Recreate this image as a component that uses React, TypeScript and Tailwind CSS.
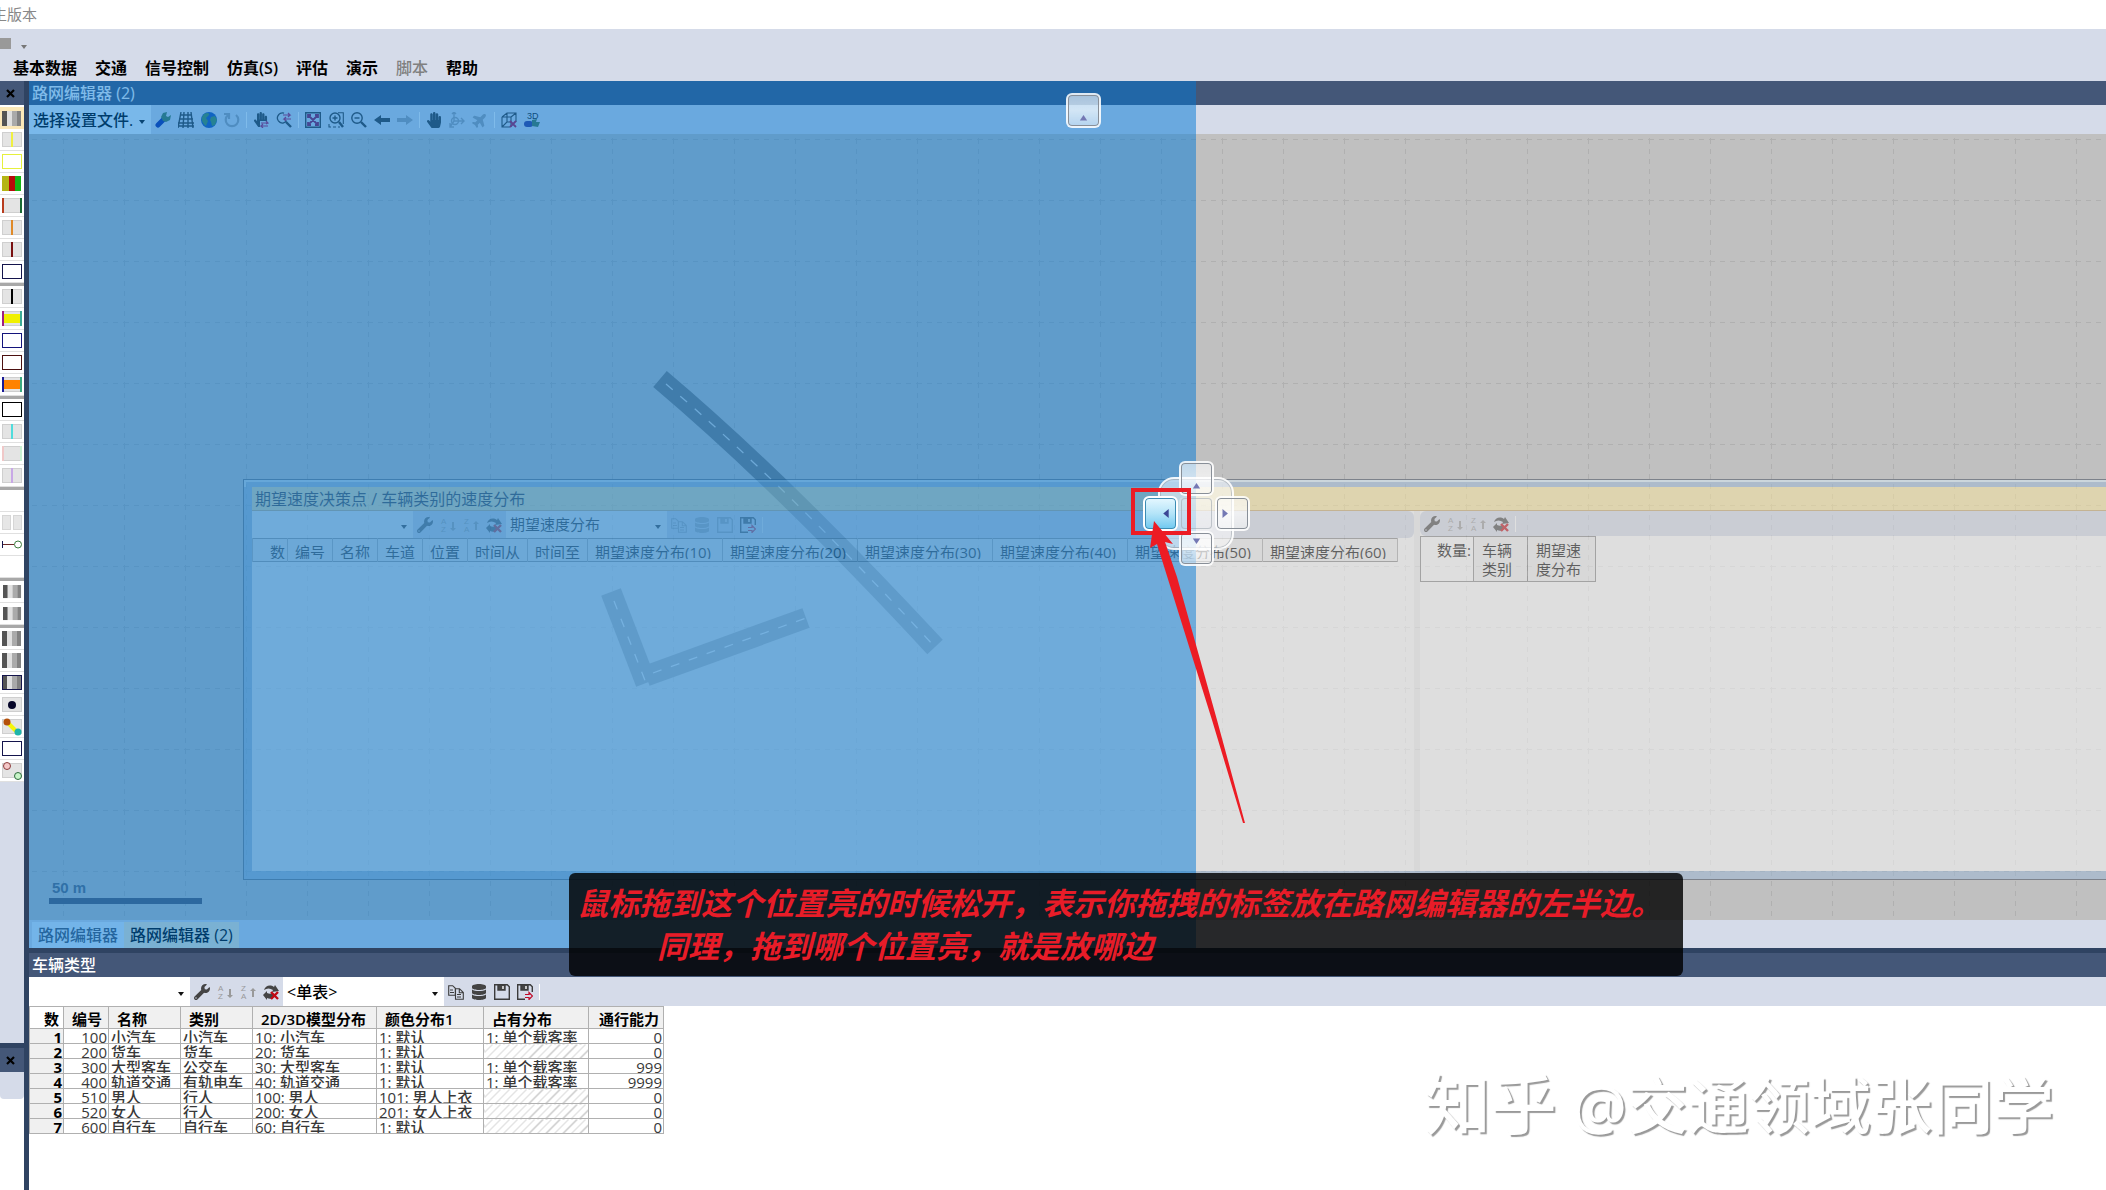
import React, { useState } from 'react';
import { FaWrench, FaHandPaper, FaDatabase, FaPlane } from 'react-icons/fa';

const menu = ['基本数据', '交通', '信号控制', '仿真(S)', '评估', '演示', '脚本', '帮助'];

const vehicleHead = ['数', '编号', '名称', '类别', '2D/3D模型分布', '颜色分布1', '占有分布', '通行能力'];
const vehicleRows = [
  ['1', '100', '小汽车', '小汽车', '10: 小汽车', '1: 默认', '1: 单个载客率', '0'],
  ['2', '200', '货车', '货车', '20: 货车', '1: 默认', '', '0'],
  ['3', '300', '大型客车', '公交车', '30: 大型客车', '1: 默认', '1: 单个载客率', '999'],
  ['4', '400', '轨道交通', '有轨电车', '40: 轨道交通', '1: 默认', '1: 单个载客率', '9999'],
  ['5', '510', '男人', '行人', '100: 男人', '101: 男人上衣', '', '0'],
  ['6', '520', '女人', '行人', '200: 女人', '201: 女人上衣', '', '0'],
  ['7', '600', '自行车', '自行车', '60: 自行车', '1: 默认', '', '0'],
];
const vehicleCols = [
  'w-[34px]', 'w-[45px]', 'w-[72px]', 'w-[72px]', 'w-[124px]', 'w-[107px]', 'w-[105px]', 'w-[75px]',
];

const speedHead = [
  ['数', 'w-[35px] text-right'],
  ['编号', 'w-[45px]'],
  ['名称', 'w-[45px]'],
  ['车道', 'w-[45px]'],
  ['位置', 'w-[45px]'],
  ['时间从', 'w-[60px]'],
  ['时间至', 'w-[60px]'],
  ['期望速度分布(10)', 'w-[135px]'],
  ['期望速度分布(20)', 'w-[135px]'],
  ['期望速度分布(30)', 'w-[135px]'],
  ['期望速度分布(40)', 'w-[135px]'],
  ['期望速度分布(50)', 'w-[135px]'],
  ['期望速度分布(60)', 'w-[135px]'],
];

// network object types in the sidebar, split into groups
const objectGroups = [
  ['link', 'bar:#f0f040', 'box:#e6f03c', 'signal', 'edges:#b83c1e:#1a6a34', 'bar:#e08a28', 'bar:#7a1010', 'box:#14144c'],
  ['bar:#000000', 'fill:#f0f000:#a02080:#3caa96', 'box:#14147c', 'box:#4c1010', 'fill:#ff8200:#1a1a96:#3caa82'],
  ['box:#000000', 'bar:#50dcdc', 'edges:#f0c8c8:#c8f0d2', 'bar:#c8a8e6'],
  ['none', 'split', 'connector', 'none'],
  ['linkSmall', 'linkSmall'],
  ['link', 'link', 'linkFrame', 'dot', 'route', 'box:#14144c', 'nodes'],
];

function ObjectIcon({ spec }: { spec: string }) {
  const [kind, a, b, c] = spec.split(':');
  const pad = <rect x="0.5" y="0.5" width="19" height="14" fill="#e4e4e4" stroke="#cfcfcf" />;
  return (
    <svg width="20" height="15" viewBox="0 0 20 15" className="block overflow-visible">
      {['bar', 'edges', 'dot', 'route', 'nodes', 'fill'].includes(kind) && pad}
      {kind === 'bar' && <rect x="9" width="2" height="15" fill={a} />}
      {kind === 'box' && <rect x="0.5" y="0.5" width="19" height="14" fill="#fff" stroke={a} />}
      {kind === 'edges' && (
        <>
          <rect width="2" height="15" fill={a} />
          <rect x="18" width="2" height="15" fill={b} />
        </>
      )}
      {kind === 'fill' && (
        <>
          <rect x="2" y="3" width="16" height="9" fill={a} />
          <rect width="2" height="15" fill={b} />
          <rect x="18" width="2" height="15" fill={c} />
        </>
      )}
      {kind === 'signal' && (
        <>
          <rect width="7" height="15" fill="#b4b414" />
          <rect x="7" width="6" height="15" fill="#b80a0a" />
          <rect x="13" width="6" height="15" fill="#14b414" />
        </>
      )}
      {(kind === 'link' || kind === 'linkFrame' || kind === 'linkSmall') && (
        <g transform={kind === 'linkSmall' ? 'translate(1 1) scale(0.95 0.87)' : undefined}>
          <rect width="5" height="15" fill="#545454" />
          <rect x="5" width="5" height="15" fill="#e0e0e0" />
          <rect x="10" width="5" height="15" fill="#aaaaaa" />
          <rect x="15" width="4" height="15" fill="#828282" />
        </g>
      )}
      {kind === 'linkFrame' && <rect x="0.5" y="0.5" width="19" height="14" fill="none" stroke="#14144c" />}
      {kind === 'split' && (
        <>
          <rect x="0.5" y="0.5" width="8" height="14" fill="#e6e6e6" stroke="#d6d6d6" />
          <rect x="11.5" y="0.5" width="8" height="14" fill="#e6e6e6" stroke="#d6d6d6" />
        </>
      )}
      {kind === 'connector' && (
        <>
          <path d="M0.5 4v7" stroke="#14144c" />
          <path d="M1 7.5h11" stroke="#6a2828" />
          <circle cx="16" cy="7.5" r="3.5" fill="#fff" stroke="#3c7a3c" />
        </>
      )}
      {kind === 'dot' && <circle cx="10" cy="8" r="4" fill="#050528" />}
      {kind === 'route' && (
        <>
          <path d="M6 4l9 9" stroke="#f5f50a" strokeWidth="4" />
          <circle cx="5" cy="3" r="3.5" fill="#b4500a" />
          <circle cx="16" cy="13" r="3.5" fill="#1eb4aa" />
        </>
      )}
      {kind === 'nodes' && (
        <>
          <circle cx="5" cy="3" r="3.5" fill="#f5c8c8" stroke="#8c3c3c" />
          <circle cx="16" cy="13" r="3.5" fill="#c8f5c8" stroke="#2d6a3c" />
        </>
      )}
    </svg>
  );
}

type ToolProps = { label: string; children: React.ReactNode; faded?: boolean };

function Tool({ label, children, faded }: ToolProps) {
  return (
    <button aria-label={label} className={faded ? 'size-4 shrink-0 opacity-35' : 'size-4 shrink-0'}>
      {children}
    </button>
  );
}

function Glyph({ children }: { children: React.ReactNode }) {
  return (
    <svg viewBox="0 0 16 16" width="16" height="16" fill="none" stroke="#3c3c3c" strokeWidth="1.4" className="block">
      {children}
    </svg>
  );
}

function Sep() {
  return <span className="-mx-px h-4 w-px shrink-0 border-l border-white" />;
}

function CloseIcon() {
  return (
    <svg viewBox="0 0 9 9" className="ml-1.5 size-[9px]">
      <path d="M1 1l7 7M8 1L1 8" stroke="#000" strokeWidth="2.2" />
    </svg>
  );
}

function Wrench() {
  return <FaWrench className="size-4 text-[#444]" />;
}

function SortTools() {
  return (
    <>
      <Tool label="设置">
        <Wrench />
      </Tool>
      <Tool label="升序">
        <svg viewBox="0 0 16 16" className="block size-4" fill="#999">
          <text x="1" y="7" fontSize="8" fontFamily="Liberation Sans">A</text>
          <text x="1" y="15" fontSize="8" fontFamily="Liberation Sans">Z</text>
          <path d="M12 5h2v6h2l-3 3-3-3h2z" />
        </svg>
      </Tool>
      <Tool label="降序">
        <svg viewBox="0 0 16 16" className="block size-4" fill="#999">
          <text x="1" y="7" fontSize="8" fontFamily="Liberation Sans">Z</text>
          <text x="1" y="15" fontSize="8" fontFamily="Liberation Sans">A</text>
          <path d="M12 13h2v-6h2l-3-3-3 3h2z" />
        </svg>
      </Tool>
      <Tool label="取消同步">
        <svg viewBox="0 0 16 16" className="block size-4">
          <path d="M1 6c1-4 6-6 10-3l1-2 4 6-7 1 1-2C7 4 4 4 1 6z" fill="#444" />
          <path d="M0 11l4-4v2c2 1 4 1 6 0v5c-2 1-4 1-6 0v2z" fill="#444" />
          <path d="M8 8l7 7M15 8l-7 7" stroke="#c00a14" strokeWidth="2.4" />
        </svg>
      </Tool>
    </>
  );
}

function SaveTools({ faded }: { faded?: boolean }) {
  return (
    <>
      <Tool label="复制" faded={faded}>
        <Glyph>
          <path d="M0.7 1.7h4l2.6 2.6v7H0.7zM7.5 4.7h4l3.8 3.8v6.8H7.5zM11.3 4.7v4h4M2 6h3M2 8.500h4M9 10.500h4M9 13h4" strokeWidth="1.1" />
        </Glyph>
      </Tool>
      <Tool label="数据库" faded={faded}>
        <FaDatabase className="size-4 text-[#444]" />
      </Tool>
      <Tool label="保存" faded={faded}>
        <Glyph>
          <path d="M0.7 0.7h12.600l2 2v12.600H0.700z" />
          <path d="M4 0.700h7v5.300H4z" fill="#444" />
          <path d="M9 2v3" stroke="#fff" />
        </Glyph>
      </Tool>
      <Tool label="另存为">
        <Glyph>
          <path d="M15.300 8V2.700l-2-2H0.700v14.600H8" />
          <path d="M4 0.700h7v5.300H4z" fill="#444" />
          <path d="M9 2v3" stroke="#fff" />
          <path d="M8 10.500h4V8.500l3.500 3.500-3.500 3.500v-2H8" stroke="#c00a28" strokeWidth="1.200" />
        </Glyph>
      </Tool>
      <Sep />
    </>
  );
}

function Combo({ label, value, className }: { label: string; value: string; className: string }) {
  return (
    <span className={`relative flex shrink-0 self-stretch ${className}`}>
      <select aria-label={label} className="w-full appearance-none bg-transparent pr-3 pl-1 text-inherit outline-none">
        <option>{value}</option>
      </select>
      <svg viewBox="0 0 6 4" className="pointer-events-none absolute top-1/2 right-1.5 h-1 w-1.5">
        <path d="M0 0h6L3 4z" fill="#111" />
      </svg>
    </span>
  );
}

function EditorToolbar() {
  return (
    <div className="flex h-[29px] items-center bg-[#d5dbe9]">
      <Combo label="设置文件" value="选择设置文件." className="w-[122px] bg-[#f3f8ff] text-base font-medium" />
      <div className="flex items-center gap-[7px] px-1">
        <Tool label="编辑设置">
          <svg viewBox="0 0 16 16" className="block size-4">
            <path d="M3 13l6-6" stroke="#1428a0" strokeWidth="5" strokeLinecap="round" />
            <path d="M8 9L6 5l2-4 4-1-1 4 2 1 3-2-1 5-4 2z" fill="#4c7a50" />
          </svg>
        </Tool>
        <Tool label="网格">
          <Glyph>
            <path d="M3 0L0 16M6 0L5 16M10 0v16M13 0l2 16M2 3h12M1 7h14M0 11h16M0 14h16" />
          </Glyph>
        </Tool>
        <Tool label="地图">
          <svg viewBox="0 0 16 16" className="block size-4">
            <circle cx="8" cy="8" r="8" fill="#2050b0" />
            <path d="M3 2c3-2 6-1 5 1L5 6l2 3-2 5C2 12 0 8 1 5zM10 5l4-1 2 4-2 5-3 1-1-4-1-2z" fill="#4c8c50" />
          </svg>
        </Tool>
        <Tool label="刷新" faded>
          <Glyph>
            <path d="M12 3a6.300 6.300 0 1 1-8 0M5 7V2H0" strokeWidth="2.200" />
          </Glyph>
        </Tool>
        <Sep />
        <Tool label="同步平移">
          <svg viewBox="0 0 16 16" className="block size-4">
            <FaHandPaper size={15} color="#3c3c3c" />
            <path d="M7 9h9v7H7z" fill="#d5dbe9" />
            <path d="M8 11h7l-2-2M15 11l-2 1M15 14H8l2-2M8 14l2 2" stroke="#b02060" strokeWidth="1.200" fill="none" />
          </svg>
        </Tool>
        <Tool label="同步缩放">
          <Glyph>
            <path d="M8 1.200a5 5 0 1 0 2.600 7.500" />
            <path d="M10 10l5 5" strokeWidth="2.400" />
            <path d="M7 3h7l-2-2M14 3l-2 2M15 7H8l2-2M8 7l2 2" stroke="#b02060" strokeWidth="1.200" />
          </Glyph>
        </Tool>
        <Sep />
        <Tool label="显示全部">
          <Glyph>
            <path d="M0.700 0.700h14.600v14.600H0.700z" />
            <path d="M3 6V3h3M10 3h3v3M13 10v3h-3M6 13H3v-3M3 3l10 10M13 3L3 13" stroke="#8c1450" strokeWidth="1.800" />
          </Glyph>
        </Tool>
        <Tool label="窗口缩放">
          <Glyph>
            <path d="M1 12v3h2M5 15h3M10 15h2M10 0.700h5.300V12" strokeWidth="1.100" />
            <circle cx="7" cy="6" r="5" />
            <path d="M4.500 6h5M7 3.500v5" />
            <path d="M11 10l4 5" strokeWidth="2.400" />
          </Glyph>
        </Tool>
        <Tool label="缩小">
          <Glyph>
            <circle cx="6" cy="6" r="5.200" />
            <path d="M3.500 6h5" />
            <path d="M10 10l5 5" strokeWidth="2.400" />
          </Glyph>
        </Tool>
        <Tool label="上一视图">
          <svg viewBox="0 0 16 16" className="block size-4">
            <path d="M0 8l7-5v3h9v4H7v3z" fill="#3c3c3c" />
          </svg>
        </Tool>
        <Tool label="下一视图" faded>
          <svg viewBox="0 0 16 16" className="block size-4">
            <path d="M16 8L9 3v3H0v4h9v3z" fill="#3c3c3c" />
          </svg>
        </Tool>
        <Sep />
        <Tool label="平移">
          <FaHandPaper className="size-4 text-[#3c3c3c]" />
        </Tool>
        <Tool label="旋转" faded>
          <Glyph>
            <path d="M5 0v9M5 9l-4 6M5 9h10M12 6l3 3-3 3M3 2l2-2 2 2M1 11v4h4" />
            <circle cx="6" cy="9" r="3.500" />
          </Glyph>
        </Tool>
        <Tool label="飞行" faded>
          <FaPlane className="size-4 -rotate-45 text-[#3c3c3c]" />
        </Tool>
        <Sep />
        <Tool label="三维模式">
          <Glyph>
            <path d="M1 5l5-4h9v9M1 5h9v10M1 5v10h8M10 5l5-4M6 1v9L1 15M6 10h4" strokeWidth="1.100" />
            <path d="M9 9l6 6M15 9l-6 6" stroke="#b01450" strokeWidth="1.800" />
          </Glyph>
        </Tool>
        <Tool label="三维信息">
          <svg viewBox="0 0 16 16" className="block size-4 overflow-visible">
            <text x="3" y="7" fontSize="9" fontFamily="Liberation Sans" fill="#222">3D</text>
            <rect x="0" y="9" width="9" height="6" rx="3" fill="#3c3c96" />
            <path d="M8 8l5-1-1 3h4l-2 5-6-1z" fill="#4c7a50" />
          </svg>
        </Tool>
      </div>
    </div>
  );
}

function NetworkCanvas() {
  return (
    <div className="relative flex-1 overflow-hidden bg-[#c0c0c0]">
      <svg className="absolute inset-0 h-full w-full">
        <defs>
          <pattern id="grid" x="34" y="5" width="61" height="61" patternUnits="userSpaceOnUse">
            <path d="M0.500 0v61M0 0.500h61" stroke="#b0b0b0" strokeDasharray="5 5" />
          </pattern>
        </defs>
        <rect width="100%" height="100%" fill="url(#grid)" />
        <g fill="none" stroke="#808080" strokeWidth="21">
          <path d="M631 245Q753 348 906 513" />
          <path d="M582 458L617 549" />
          <path d="M617 542L777 484" />
        </g>
        <g fill="none" stroke="#d8d8d8" strokeWidth="1.300" strokeDasharray="9 10">
          <path d="M637 250Q753 348 906 513" />
          <path d="M585 467L617 549" />
          <path d="M624 539L777 484" />
        </g>
      </svg>
      <div className="absolute bottom-4 left-5 w-[153px] border-b-[6px] border-[#585868] pl-[3px] font-['Liberation_Sans'] text-[15px] leading-5 font-bold text-[#606878]">
        50 m
      </div>
    </div>
  );
}

// the tool window being dragged, half transparent until it is dropped
function SpeedWindow() {
  return (
    <div className="absolute top-[398px] right-0 bottom-[68px] left-[214px] flex flex-col border-y border-l border-[#3c4658] bg-[#9cb8d6] pb-2 pl-2 opacity-50">
      <div className="-ml-2 h-[7px] shrink-0 border-t-2 border-l-2 border-[#d8ecf8]" />
      <div className="flex h-6 shrink-0 items-center border-b border-[#c8a868] bg-[#fce8a0] pl-[3px] text-base text-black">
        期望速度决策点 / 车辆类别的速度分布
      </div>
      <div className="flex min-h-0 flex-1 bg-[#fcfcfc]">
        <div className="w-[1162px] shrink-0">
          <div className="flex h-[27px] items-center rounded-r-md bg-[#d5dbe9] text-[15px]">
            <Combo label="布局" value="" className="w-[161px] bg-[#fcfcfc]" />
            <div className="flex items-center gap-[7px] px-1"><SortTools /></div>
            <Combo label="关联列表" value="期望速度分布" className="w-[161px] bg-[#fcfcfc]" />
            <div className="flex items-center gap-[7px] px-1"><SaveTools faded /></div>
          </div>
          <table className="w-[1145px] table-fixed border-collapse border border-[#888] text-[15px] leading-[18px] text-black">
            <thead>
              <tr className="bg-[#f0f0f0]">
                {speedHead.map(([name, cls]) => (
                  <th key={name} className={`border-x border-[#aaa] p-0 text-left font-normal ${cls}`}>
                    <div className="mt-1 mb-0.5 h-4 overflow-hidden pr-0.5 pl-[7px] whitespace-nowrap">{name}</div>
                  </th>
                ))}
              </tr>
            </thead>
          </table>
        </div>
        <div className="w-1.5 shrink-0 bg-[#f0f0f0]" />
        <div className="min-w-0 flex-1">
          <div className="flex h-[25px] items-center gap-[7px] rounded-l-md bg-[#d5dbe9] px-1">
            <SortTools />
            <Sep />
          </div>
          <table className="w-[176px] table-fixed border-collapse border border-[#888] text-[15px] leading-[19px] text-black">
            <thead>
              <tr className="h-[45px] bg-[#f0f0f0] align-top">
                <th className="w-[53px] border-r border-[#888] bg-[#fcfcfc] pt-1 pr-0.5 pl-0 text-right font-normal">数量:</th>
                <th className="w-[54px] border-r border-[#888] px-2 pt-1 text-left font-normal">车辆类别</th>
                <th className="px-2 pt-1 text-left font-normal"><span className="block w-12">期望速度分布</span></th>
              </tr>
            </thead>
          </table>
        </div>
      </div>
    </div>
  );
}

type Side = 'top' | 'left' | 'right' | 'bottom' | 'center';

const arrows = {
  top: 'M17 22l4 6h-8z',
  bottom: 'M17 12l4-6h-8z',
  left: 'M20 17l6-5v10z',
  right: 'M12 17l-6-5v10z',
  center: '',
};

function DockButton({ side, active }: { side: Side; active?: boolean }) {
  const look = active
    ? 'border-white from-[#e6f8ff] via-[#b4e4f8] to-[#6cc8f0] ring-[#3c8cb4]'
    : side === 'center'
      ? 'border-transparent from-white/30 to-white/10 ring-[#a0a8b0]/60'
      : 'border-white/70 from-white/60 via-white/70 to-white/50 ring-[#888f98]';
  return (
    <button aria-label={side} className={`size-[35px] rounded-md border-2 bg-linear-to-b ring-1 ring-inset ${look}`}>
      <svg viewBox="0 0 34 34" className="block h-full w-full">
        <path d={arrows[side]} fill={active ? '#3c4694' : '#7478b4'} />
      </svg>
    </button>
  );
}

function DockGuide() {
  return (
    <div className="absolute top-[380px] left-[1113px] grid h-[105px] w-[108px] grid-cols-3 grid-rows-3 justify-items-center">
      <div className="absolute inset-4 rounded-2xl border-2 border-white/80 bg-white/55 ring-1 ring-[#a0a8b0]/60 ring-inset" />
      {(['', 'top', '', 'left', 'center', 'right', '', 'bottom', ''] as (Side | '')[]).map((side, i) => (
        <div key={i} className="relative">{side && <DockButton side={side} active={side === 'left'} />}</div>
      ))}
    </div>
  );
}

function Sidebar() {
  return (
    <aside className="flex w-6 shrink-0 flex-col">
      <button aria-label="关闭" className="flex h-6 items-center bg-[#445778]"><CloseIcon /></button>
      <div className="divide-y-[3px] divide-[#a8a8a8] bg-white pt-0.5">
        {objectGroups.map((group, i) => (
          <div key={i}>
            {group.map((spec, j) => (
              <button
                key={j}
                aria-label="路网对象"
                className={
                  i === 0 && j === 0
                    ? 'flex h-[22px] w-full items-center bg-[#fce8b8] pl-0.5'
                    : 'flex h-[22px] w-full items-center border-b border-[#e0e0e0] pl-0.5'
                }
              >
                <ObjectIcon spec={spec} />
              </button>
            ))}
          </div>
        ))}
      </div>
      <div className="h-[261px] bg-[#d5dbe9]" />
      <button aria-label="关闭" className="box-content flex h-6 items-center border-t-[5px] border-[#2f4362] bg-[#445778]"><CloseIcon /></button>
      <div className="h-[27px] rounded-b-sm bg-[#d5dbe9]" />
    </aside>
  );
}

function VehicleTypes() {
  return (
    <section className="h-[242px] shrink-0 border-t-[5px] border-[#2f4362]">
      <h2 className="flex h-6 items-center bg-[#445778] pl-[3px] text-base leading-[22px] font-medium text-white">车辆类型</h2>
      <div className="flex h-[29px] items-center bg-[#d5dbe9]">
        <Combo label="布局" value="" className="w-[161px] bg-white" />
        <div className="flex items-center gap-[7px] px-1"><SortTools /></div>
        <Combo label="关联列表" value="<单表>" className="w-[161px] bg-white text-base font-medium" />
        <div className="flex items-center gap-[7px] px-1"><SaveTools /></div>
      </div>
      <table className="w-[635px] table-fixed border-collapse border border-[#b0b0b0] text-[15px]">
        <thead>
          <tr className="bg-[#f0f0f0]">
            {vehicleHead.map((name, i) => (
              <th key={name} className={`border border-[#b0b0b0] p-0 font-semibold text-black first:bg-white ${vehicleCols[i]}`}>
                <div className={`h-[21px] overflow-hidden leading-6 whitespace-nowrap ${i === 0 || i === 7 ? 'pr-1 text-right' : 'pl-2 text-left'}`}>
                  {name}
                </div>
              </th>
            ))}
          </tr>
        </thead>
        <tbody>
          {vehicleRows.map((row) => (
            <tr key={row[0]}>
              {row.map((cell, i) => (
                <td
                  key={i}
                  className={`border border-[#b0b0b0] p-0 ${
                    i === 0
                      ? 'bg-[#f0f0f0] font-bold text-black'
                      : cell === ''
                        ? 'bg-[repeating-linear-gradient(135deg,#fff_0_5px,#c8c8c8_5px_6px)]'
                        : 'bg-white font-medium text-[#383838]'
                  }`}
                >
                  <div className={`h-3.5 overflow-hidden leading-[17px] whitespace-nowrap ${i < 2 || i === 7 ? 'pr-px text-right' : 'pl-0.5'}`}>
                    {cell}
                  </div>
                </td>
              ))}
            </tr>
          ))}
        </tbody>
      </table>
    </section>
  );
}

export default function App() {
  const [tab, setTab] = useState(1);

  return (
    <div className="relative flex h-screen flex-col overflow-hidden bg-white font-['Open_Sans','Noto_Sans_CJK_SC',sans-serif] text-black">
      <header className="flex h-[29px] shrink-0 items-center text-[15px] text-[#888]">
        <span className="-ml-2">生版本</span>
      </header>
      <div className="h-[52px] shrink-0 bg-[#d5dbe9]">
        <div className="flex h-[26px] items-end gap-2.5 pb-1.5">
          <span className="h-[11px] w-[11px] bg-[#999]" />
          <svg viewBox="0 0 6 4" className="h-1 w-1.5"><path d="M0 0h6L3 4z" fill="#777" /></svg>
        </div>
        <nav className="flex h-[26px] items-center gap-[18px] pl-[13px] text-base font-semibold">
          {menu.map((m) => (
            <button key={m} className={m === '脚本' ? 'font-medium text-[#808080]' : 'text-black'}>{m}</button>
          ))}
        </nav>
      </div>

      <div className="flex min-h-0 flex-1">
        <Sidebar />
        <div className="w-[5px] shrink-0 bg-[#2f4362]" />
        <main className="flex min-w-0 flex-1 flex-col">
          <section className="relative flex min-h-0 flex-1 flex-col overflow-hidden">
            <h1 className="flex h-6 shrink-0 items-center bg-[#445778] pl-[3px] text-base leading-[22px] font-medium text-white">路网编辑器 (2)</h1>
            <EditorToolbar />
            <NetworkCanvas />
            <div className="flex h-7 shrink-0 items-end bg-[#d5dbe9] pl-[3px] text-base">
              {['路网编辑器', '路网编辑器 (2)'].map((name, i) => (
                <button
                  key={name}
                  onClick={() => setTab(i)}
                  className={`h-[26px] px-1.5 font-medium ${tab === i ? 'bg-[#f5ead0] text-black' : 'bg-[#e6f0fc] text-[#4a5568]'}`}
                >
                  {name}
                </button>
              ))}
            </div>
            <SpeedWindow />
            <div className="pointer-events-none absolute inset-y-0 left-0 w-[1167px] bg-[#0077d6]/50" />
            <div className="absolute top-3 left-[1037px]"><DockButton side="top" /></div>
            <DockGuide />
          </section>
          <VehicleTypes />
        </main>
      </div>

      <svg className="pointer-events-none absolute top-[486px] left-[1130px]" width="120" height="340" viewBox="0 0 120 340">
        <rect x="3" y="4" width="56" height="43" fill="none" stroke="#ec1c24" strokeWidth="4" />
        <path d="M24 35l19 23-8-2L47 91 87 234 115 337h-2L82 234 27 58l-7 4z" fill="#ec1c24" />
      </svg>
      <div className="absolute top-[873px] left-[569px] h-[103px] w-[1114px] rounded-md bg-black/[.82] px-2 pt-[9px] text-[31px] leading-[43px] font-bold whitespace-nowrap text-[#e81c28] italic">
        <p>鼠标拖到这个位置亮的时候松开，表示你拖拽的标签放在路网编辑器的左半边。</p>
        <p className="pl-20">同理，拖到哪个位置亮，就是放哪边</p>
      </div>
      <div className="absolute right-[52px] bottom-10 text-[61px] leading-[88px] font-medium whitespace-nowrap text-white [text-shadow:2px_2px_1px_#999]">
        <span className="text-[66px]">知乎</span> @交通领域张同学
      </div>
    </div>
  );
}
